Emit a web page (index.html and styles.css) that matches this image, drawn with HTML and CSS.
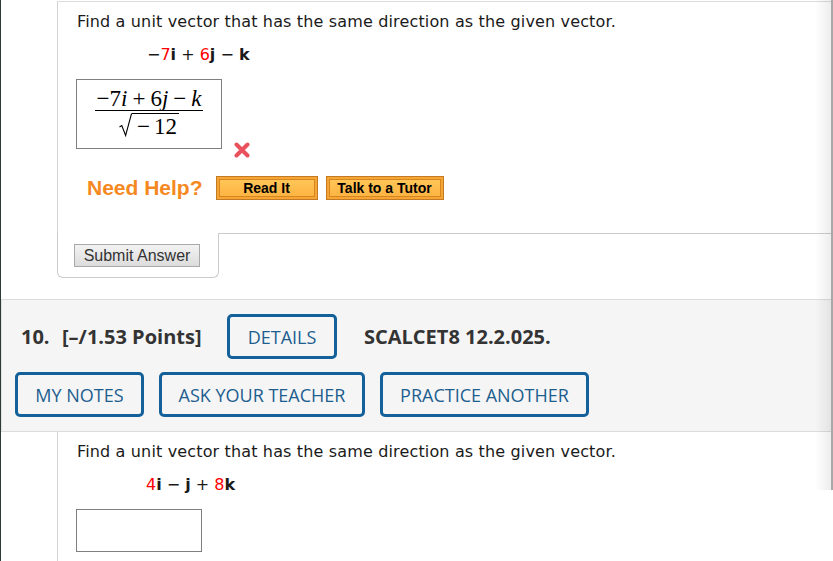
FILE: index.html
```html
<!DOCTYPE html>
<html>
<head>
<meta charset="utf-8">
<link rel="stylesheet" href="styles.css">
</head>
<body>
<div class="page">
  <div class="q9">
    <div class="q9-body">
      <p class="prompt">Find a unit vector that has the same direction as the given vector.</p>
      <p class="vector">−<span class="red">7</span><b>i</b> + <span class="red">6</span><b>j</b> − <b>k</b></p>
      <div class="answer-row">
        <div class="answer-box">
          <span class="frac">
            <span class="num">−7<i>i</i><span class="op">+</span>6<i>j</i><span class="op">−</span><i>k</i></span>
            <span class="den">
              <svg class="surd" width="13" height="25" viewBox="0 0 13 25"><path d="M0.5 14 L2.8 12.6 L6.6 22.5 L12.6 0.5" fill="none" stroke="#000" stroke-width="1.1"/></svg><span class="rad"><span class="op lead">−</span>12</span>
            </span>
          </span>
        </div>
        <svg class="wrong" width="16" height="16" viewBox="0 0 16 16"><path d="M2.5 2.5 L13.5 13.5 M13.5 2.5 L2.5 13.5" stroke="#e9525c" stroke-width="4" stroke-linecap="round"/></svg>
      </div>
      <div class="help">
        <span class="help-label">Need Help?</span>
        <button class="btn-orange read"><span>Read It</span></button>
        <button class="btn-orange tutor"><span>Talk to a Tutor</span></button>
      </div>
    </div>
    <div class="submit-tab">
      <button class="submit">Submit Answer</button>
    </div>
  </div>

  <div class="q10-head">
    <div class="head-row">
      <span class="qnum">10.</span>
      <span class="points">[–/1.53 Points]</span>
      <button class="btn-outline details">DETAILS</button>
      <span class="qcode">SCALCET8 12.2.025.</span>
    </div>
    <div class="head-row actions">
      <button class="btn-outline notes">MY NOTES</button>
      <button class="btn-outline ask">ASK YOUR TEACHER</button>
      <button class="btn-outline practice">PRACTICE ANOTHER</button>
    </div>
  </div>

  <div class="q10-body">
    <p class="prompt">Find a unit vector that has the same direction as the given vector.</p>
    <p class="vector v2"><span class="red">4</span><b>i</b> − <b>j</b> + <span class="red">8</span><b>k</b></p>
    <div class="empty-box"></div>
  </div>

  <div class="edge"></div>
</div>
</body>
</html>
```
FILE: styles.css
```css
* { box-sizing: border-box; }
html, body { margin: 0; padding: 0; background: #fff; }
body {
  width: 833px;
  height: 561px;
  overflow: hidden;
  font-family: "DejaVu Sans", Verdana, sans-serif;
  color: #1a1a1a;
}
.page {
  position: relative;
  height: 561px;
  border-left: 1px solid #2b3a32;
}

/* question 9 tail */
.q9 { margin-left: 56px; padding-top: 1px; }
.q9-body {
  border-top: 1px solid #dcdcdc;
  border-left: 1px solid #d2d2d2;
  border-bottom: 1px solid #cccccc;
  padding: 10px 0 33px 19px;
}
.prompt { font-size: 16px; letter-spacing: 0.15px; line-height: 20px; margin: 0; }
.vector { font-size: 16px; line-height: 20px; margin: 13px 0 0 70px; }
.vector b { font-weight: bold; }
.red { color: #ff0000; }

.answer-row { display: flex; align-items: flex-end; margin: 14px 0 0 -1px; }
.answer-box {
  width: 146px;
  height: 70px;
  border: 1px solid #7f7f7f;
  display: flex;
  align-items: center;
  justify-content: center;
}
.wrong { margin: 0 0 -9px 12px; }

.frac {
  display: inline-flex;
  flex-direction: column;
  align-items: center;
  font-family: "Liberation Serif", "Times New Roman", serif;
  font-size: 23px;
  line-height: 21px;
  color: #000;
  margin-top: -2px;
}
.frac i { font-style: italic; }
.op { margin: 0 5px; }
.op.lead { margin: 0 4px 0 5px; }
.num { padding: 0 2px 1px; border-bottom: 1px solid #000; }
.den { display: flex; align-items: flex-start; padding-top: 2px; }
.surd { display: block; }
.rad { border-top: 1px solid #000; padding: 2px 2px 0 0; }

.help { display: flex; align-items: center; height: 24px; margin: 27px 0 0 10px; }
.help-label {
  font-family: "Liberation Sans", Arial, sans-serif;
  font-weight: bold;
  font-size: 21px;
  color: #f5891f;
  margin-right: 13px;
}
.btn-orange {
  height: 24px;
  padding: 2px;
  border: 1px solid #c27a24;
  background: #f7a534;
  font: bold 14px "Liberation Sans", Arial, sans-serif;
  color: #000;
  cursor: pointer;
}
.btn-orange span {
  display: flex;
  align-items: center;
  justify-content: center;
  height: 100%;
  border: 1px solid #d5861f;
  background: linear-gradient(#ffc657, #fdb443);
}
.read { width: 102px; margin-right: 8px; }
.tutor { width: 118px; }

.submit-tab {
  width: 162px;
  margin-top: -1px;
  background: #fff;
  border: 1px solid #cccccc;
  border-top: none;
  border-radius: 0 0 6px 6px;
  padding: 11px 0 10px 16px;
}
.submit {
  display: block;
  width: 126px;
  height: 23px;
  padding: 0;
  border: 1px solid #a9a9a9;
  background: linear-gradient(#f3f3f3, #dcdcdc);
  font: 16px "Liberation Sans", Arial, sans-serif;
  color: #333;
}

/* question 10 header */
.q10-head {
  margin-top: 21px;
  background: #f5f5f5;
  border-top: 1px solid #dcdcdc;
  border-bottom: 1px solid #dcdcdc;
  border-left: 1px solid #e2e2e2;
  padding: 14px 0 14px 13px;
  font-family: "Open Sans", sans-serif;
  color: #333;
}
.head-row { display: flex; align-items: center; }
.actions { margin-top: 13px; gap: 15px; }
.qnum { font-weight: bold; font-size: 20px; margin-left: 6px; width: 41px; }
.points { font-weight: bold; font-size: 20px; width: 165px; }
.qcode { font-weight: bold; font-size: 20px; margin-left: 27px; }
.btn-outline {
  height: 45px;
  padding: 0;
  border: 3px solid #14609a;
  border-radius: 5px;
  background: transparent;
  color: #1d5e8f;
  font: 18px "Open Sans", sans-serif;
  display: flex;
  align-items: center;
  justify-content: center;
}
.details { width: 110px; }
.notes { width: 129px; }
.ask { width: 206px; }
.practice { width: 209px; }

/* question 10 body */
.q10-body {
  margin-left: 56px;
  border-left: 1px solid #d2d2d2;
  padding: 10px 0 0 19px;
  height: 140px;
}
.v2 { margin-left: 69px; }
.empty-box {
  width: 126px;
  height: 43px;
  margin: 14px 0 0 -1px;
  border: 1px solid #7f7f7f;
}

.edge {
  position: absolute;
  top: 0;
  right: 0;
  width: 18px;
  height: 490px;
  background: linear-gradient(to right, rgba(0,0,0,0), rgba(0,0,0,0.07));
  border-right: 2px solid #a8a8a8;
}
```
